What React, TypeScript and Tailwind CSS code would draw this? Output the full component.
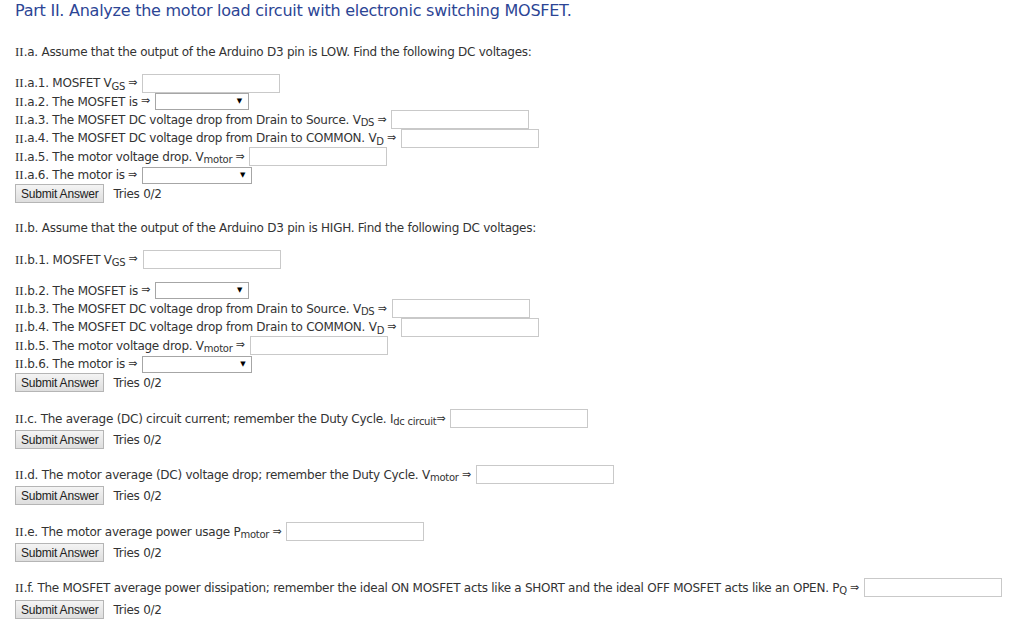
import React from "react";

const R = () => <span className="font-['Liberation_Serif',serif] text-[13px] tracking-normal">II</span>;

function Sub({ children }: { children: React.ReactNode }) {
  return <span className="text-[10px] relative top-[3px]">{children}</span>;
}

function Input({ w = 138 }: { w?: number }) {
  return (
    <span
      className="inline-block h-[19px] border border-[#c9c9c9] bg-white ml-[5px] shrink-0"
      style={{ width: w }}
    />
  );
}

function Select({ w }: { w: number }) {
  return (
    <span
      className="inline-flex items-center justify-end h-[17px] border border-[#a6a6a6] bg-white ml-[5px] pr-[6px] shrink-0"
      style={{ width: w }}
    >
      <span className="text-[7px] text-black leading-none">▼</span>
    </span>
  );
}

function Row({ h = "h-[18.4px]", children }: { h?: string; children: React.ReactNode }) {
  return <div className={`flex items-center whitespace-pre ${h}`}>{children}</div>;
}

function Arrow() {
  return <span className="text-[11px]"> ⇒</span>;
}

function Submit() {
  return (
    <div className="flex items-center h-[19px] whitespace-pre">
      <button className="h-[19px] px-[5px] border border-[#b5b5b5] bg-gradient-to-b from-[#f4f4f4] to-[#dedede] font-['Liberation_Sans',Arial,sans-serif] text-[12px] tracking-[-0.2px] text-[#222] leading-none">
        Submit Answer
      </button>
      <span className="ml-[9px]">Tries 0/2</span>
    </div>
  );
}

export default function App() {
  return (
    <div className="w-[1024px] h-[623px] bg-white overflow-hidden font-['DejaVu_Sans',Verdana,sans-serif] text-[12px] tracking-[-0.26px] text-[#333] pl-[15px]">
      <div className="h-[22px] flex items-center text-[16px] tracking-[-0.25px] text-[#2c4595]">
        Part II. Analyze the motor load circuit with electronic switching MOSFET.
      </div>
      <div className="h-[52px] pt-[23px] leading-[14px] whitespace-pre">
        <R />.a. Assume that the output of the Arduino D3 pin is LOW. Find the following DC voltages:
      </div>
      <div className="flex flex-col">
        <Row><R />.a.1. MOSFET V<Sub>GS</Sub><Arrow /><Input /></Row>
        <Row><R />.a.2. The MOSFET is<Arrow /><Select w={94} /></Row>
        <Row><R />.a.3. The MOSFET DC voltage drop from Drain to Source. V<Sub>DS</Sub><Arrow /><Input /></Row>
        <Row><R />.a.4. The MOSFET DC voltage drop from Drain to COMMON. V<Sub>D</Sub><Arrow /><Input /></Row>
        <Row><R />.a.5. The motor voltage drop. V<Sub>motor</Sub><Arrow /><Input /></Row>
        <Row><R />.a.6. The motor is<Arrow /><Select w={110} /></Row>
        <Submit />
      </div>
      <div className="h-[47px] pt-[18px] leading-[14px] whitespace-pre">
        <R />.b. Assume that the output of the Arduino D3 pin is HIGH. Find the following DC voltages:
      </div>
      <div className="flex flex-col">
        <Row><R />.b.1. MOSFET V<Sub>GS</Sub><Arrow /><Input /></Row>
        <div className="h-[12.6px]" />
        <Row><R />.b.2. The MOSFET is<Arrow /><Select w={94} /></Row>
        <Row><R />.b.3. The MOSFET DC voltage drop from Drain to Source. V<Sub>DS</Sub><Arrow /><Input /></Row>
        <Row><R />.b.4. The MOSFET DC voltage drop from Drain to COMMON. V<Sub>D</Sub><Arrow /><Input /></Row>
        <Row><R />.b.5. The motor voltage drop. V<Sub>motor</Sub><Arrow /><Input /></Row>
        <Row><R />.b.6. The motor is<Arrow /><Select w={110} /></Row>
        <Submit />
      </div>
      <div className="mt-[17px] flex flex-col gap-[2px]">
        <Row h="h-[19px]"><R />.c. The average (DC) circuit current; remember the Duty Cycle. I<Sub>dc circuit</Sub><span className="text-[11px]">⇒</span><Input /></Row>
        <Submit />
      </div>
      <div className="mt-[16px] flex flex-col gap-[2px]">
        <Row h="h-[19px]"><R />.d. The motor average (DC) voltage drop; remember the Duty Cycle. V<Sub>motor</Sub><Arrow /><Input /></Row>
        <Submit />
      </div>
      <div className="mt-[17px] flex flex-col gap-[2px]">
        <Row h="h-[19px]"><R />.e. The motor average power usage P<Sub>motor</Sub><Arrow /><Input /></Row>
        <Submit />
      </div>
      <div className="mt-[16px] flex flex-col gap-[3px]">
        <Row h="h-[19px]"><R />.f. The MOSFET average power dissipation; remember the ideal ON MOSFET acts like a SHORT and the ideal OFF MOSFET acts like an OPEN. P<Sub>Q</Sub><Arrow /><Input /></Row>
        <Submit />
      </div>
    </div>
  );
}
